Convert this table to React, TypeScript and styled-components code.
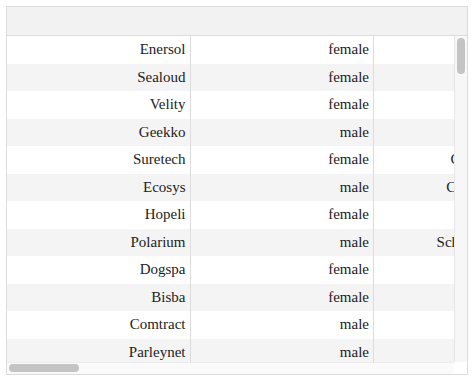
import { createGlobalStyle } from "styled-components";
import styled from "styled-components";

const GlobalStyle = createGlobalStyle`
  html, body {
    margin: 0;
    padding: 0;
    background: #fff;
  }
  body {
    font-family: "Liberation Serif", "Times New Roman", serif;
  }
`;

type Person = {
  company: string;
  gender: string;
  name: string;
  email: string;
  phone: string;
  city: string;
  state: string;
  country: string;
  age: number;
  eyeColor: string;
  balance: string;
  registered: string;
  fruit: string;
  active: string;
  tag: string;
};

const seed: [string, string, string][] = [
  ["Enersol", "female", "Lott Hines"],
  ["Sealoud", "female", "Irma Dale"],
  ["Velity", "female", "Lina Ross"],
  ["Geekko", "male", "Ward Kirby"],
  ["Suretech", "female", "Conner Stephens"],
  ["Ecosys", "male", "Cleveland Mccoy"],
  ["Hopeli", "female", "Ava Fuller"],
  ["Polarium", "male", "Schroeder Whitney"],
  ["Dogspa", "female", "Rita Gay"],
  ["Bisba", "female", "Joy Banks"],
  ["Comtract", "male", "Hahn Mack"],
  ["Parleynet", "male", "Ray Duke"],
  ["Zentix", "female", "Edna Cole"],
  ["Orbaxter", "male", "Tate Lynn"],
  ["Quilch", "female", "Mae Rice"],
  ["Exospeed", "male", "Finch Ruiz"],
  ["Netur", "female", "Lucy Hale"],
  ["Kindaloo", "male", "Owen Park"],
  ["Xumonk", "female", "Dora Wolf"],
  ["Zaggles", "male", "Rhodes Bell"],
];

const cities = ["Tyro", "Allendale", "Elwood", "Darlington", "Nadine", "Bend"];
const states = ["Ohio", "Maine", "Utah", "Iowa", "Texas", "Idaho"];
const fruits = ["apple", "banana", "strawberry"];
const eyes = ["blue", "brown", "green"];

// only the first dozen rows are in view; the rest keep the table long
const people: Person[] = Array.from({ length: 14 }, (_, i) => {
  const [company, gender, name] = seed[i % seed.length];
  return {
    company,
    gender,
    name,
    email: `${name.split(" ")[0].toLowerCase()}@${company.toLowerCase()}.com`,
    phone: `+1 (9${(i * 7) % 90 + 10}) 5${(i * 13) % 90 + 10}-${1000 + ((i * 377) % 9000)}`,
    city: cities[i % cities.length],
    state: states[(i * 5) % states.length],
    country: "USA",
    age: 20 + ((i * 11) % 40),
    eyeColor: eyes[i % eyes.length],
    balance: `$${(1000 + ((i * 733) % 3000)).toLocaleString("en-US")}.${(i * 17) % 90 + 10}`,
    registered: `20${10 + (i % 10)}-0${(i % 9) + 1}-1${i % 10}`,
    fruit: fruits[(i * 2) % fruits.length],
    active: i % 3 === 0 ? "false" : "true",
    tag: ["sunt", "velit", "dolor", "amet"][i % 4],
  };
});

const columns: (keyof Person)[] = ["company", "gender", "name"];

const Page = styled.div`
  padding: 6px;
`;

const Grid = styled.div`
  height: 369px;
  border: 1px solid #dcdcdc;
  box-sizing: border-box;
  display: flex;
  flex-direction: column;
  background: #fff;
`;

const Header = styled.div`
  height: 28px;
  flex: none;
  background: #f2f2f2;
  border-bottom: 1px solid #dedede;
`;

const Viewport = styled.div`
  flex: 1;
  min-height: 0;
  position: relative;
  overflow: hidden;
`;

const Table = styled.div`
  width: max-content;
`;

const Row = styled.div<{ $striped: boolean }>`
  display: flex;
  height: 27.5px;
  background: ${(p) => (p.$striped ? "#f4f4f4" : "#ffffff")};
`;

const Cell = styled.div`
  width: 183.5px;
  box-sizing: border-box;
  flex: none;
  padding: 0 4px;
  border-right: 1px solid #dcdcdc;
  display: flex;
  align-items: center;
  justify-content: flex-end;
  overflow: hidden;
  white-space: nowrap;
  font-size: 15px;
  color: #222;
`;

const VTrack = styled.div`
  position: absolute;
  top: 0;
  right: 0;
  bottom: 12px;
  width: 13px;
  box-sizing: border-box;
  background: #f7f7f7;
  border-left: 1px solid #e6e6e6;
  padding: 2px 3px 0 2px;
`;

const HTrack = styled.div`
  position: absolute;
  left: 0;
  right: 13px;
  bottom: 0;
  height: 12px;
  box-sizing: border-box;
  background: #fafafa;
  border-top: 1px solid #ececec;
  padding: 1px 0 0 2px;
`;

const Corner = styled.div`
  position: absolute;
  right: 0;
  bottom: 0;
  width: 13px;
  height: 12px;
  background: #fff;
`;

const Thumb = styled.div<{ $w: string; $h: string }>`
  width: ${(p) => p.$w};
  height: ${(p) => p.$h};
  background: #c4c4c4;
  border-radius: 4px;
`;

export default function App() {
  return (
    <>
      <GlobalStyle />
      <Page>
        <Grid>
          <Header />
          <Viewport>
            <Table>
              {people.map((person, index) => (
                <Row key={index} $striped={index % 2 === 1}>
                  {columns.map((col) => (
                    <Cell key={col}>{String(person[col])}</Cell>
                  ))}
                </Row>
              ))}
            </Table>
            <VTrack>
              <Thumb $w="8px" $h="36px" />
            </VTrack>
            <HTrack>
              <Thumb $w="70px" $h="8px" />
            </HTrack>
            <Corner />
          </Viewport>
        </Grid>
      </Page>
    </>
  );
}
